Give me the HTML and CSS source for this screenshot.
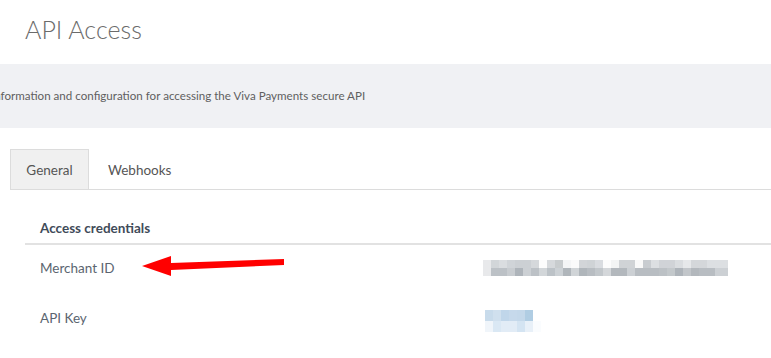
FILE: index.html
```html
<!DOCTYPE html>
<html lang="en">
<head>
  <meta charset="UTF-8">
  <title>API Access</title>
  <meta name="viewport" content="width=device-width, initial-scale=1">
  <link rel="stylesheet" href="styles.css">
</head>
<body>
  <header class="page-head">
    <h1>API Access</h1>
  </header>

  <div class="intro">
    <p>Information and configuration for accessing the Viva Payments secure API</p>
  </div>

  <nav class="tabs">
    <a class="tab active">General</a>
    <a class="tab">Webhooks</a>
  </nav>

  <section class="creds">
    <h3>Access credentials</h3>
    <div class="row">
      <span class="label">Merchant ID</span>
      <span class="blur blur-merchant"></span>
    </div>
    <div class="row">
      <span class="label">API Key</span>
      <span class="blur blur-key"></span>
    </div>

    <svg class="arrow" width="150" height="26" viewBox="0 0 150 26">
      <polygon points="0,12 29,2 29,9 142,5 142,11 29,16 29,22" fill="#ff0000"/>
    </svg>
  </section>
</body>
</html>
```

FILE: styles.css
```css
body {
  margin: 0;
  font-family: 'Lato', 'Open Sans', sans-serif;
  background-color: #ffffff;
  color: #5b6570;
  overflow: hidden;
}

.page-head {
  height: 64px;
  padding-left: 25px;
  box-sizing: border-box;
}

.page-head h1 {
  margin: 0;
  padding-top: 14px;
  font-size: 25px;
  font-weight: 300;
  color: #6b6b6b;
  line-height: 30px;
}

.intro {
  height: 64px;
  background-color: #f0f1f4;
  display: flex;
  align-items: center;
}

.intro p {
  margin: 0 0 2px -9px;
  font-size: 11.6px;
  color: #5f5f5f;
  white-space: nowrap;
}

.tabs {
  display: flex;
  margin: 21px 0 0 10px;
  border-bottom: 1px solid #dcdcdc;
}

.tab {
  height: 40px;
  padding: 0 18px;
  display: flex;
  align-items: center;
  font-size: 13.5px;
  color: #555;
  border: 1px solid transparent;
  border-bottom: none;
  box-sizing: border-box;
}

.tab.active {
  width: 79px;
  justify-content: center;
  padding: 0;
  background-color: #f0f0f0;
  border-color: #dcdcdc;
}

.creds {
  position: relative;
  margin-left: 25px;
  padding-top: 30px;
}

.creds h3 {
  margin: 0;
  padding: 0 0 7px 15px;
  font-size: 13.5px;
  font-weight: 700;
  color: #3f4b59;
  border-bottom: 2px solid #e2e2e2;
}

.row {
  display: flex;
  align-items: flex-start;
  height: 50px;
  padding: 15px 0 0 15px;
  box-sizing: border-box;
}

.label {
  width: 443px;
  font-size: 13.5px;
  line-height: 16px;
  color: #5b6570;
}

.blur {
  display: block;
  background-repeat: no-repeat;
}

.blur-merchant {
  width: 245px;
  height: 16px;
  background-image:
    linear-gradient(to right,
      #e8e9eb 0 8px, #d2d6d9 8px 16px, #dadde0 16px 24px, #d0d4d8 24px 32px,
      #ccd0d4 32px 48px, #d5d8db 48px 56px, #fcfcfc 56px 64px, #d6d9dc 64px 72px,
      #c8ccce 72px 80px, #f4f5f6 80px 88px, #fafafa 88px 96px, #d2d5d8 96px 104px,
      #cfd3d6 104px 112px, #d9dce0 112px 120px, #fcfcfc 120px 128px, #f3f4f4 128px 136px,
      #d0d3d6 136px 152px, #f9f9f9 152px 160px, #c8ccd0 160px 168px, #dcdfe2 168px 176px,
      #d0d3d7 176px 192px, #dadde0 192px 200px, #e6e8ea 200px 208px, #d4d7da 208px 224px,
      #dcdfe2 224px 245px),
    linear-gradient(to right,
      #e8e9eb 0 8px, #bcc1c6 8px 24px, #c8ccd0 24px 32px, #aeb4ba 32px 40px,
      #ccd0d4 40px 48px, #bcc1c6 48px 56px, #d2d6d9 56px 64px, #bcc2c7 64px 72px,
      #ccd1d5 72px 80px, #b0b6bb 80px 88px, #d0d4d7 88px 96px, #b0b6bb 96px 104px,
      #b8bdc2 104px 112px, #c2c7cb 112px 120px, #d4d7da 120px 128px, #b3b8bd 128px 144px,
      #ccd0d4 144px 152px, #b8bdc2 152px 176px, #bcc1c5 176px 184px, #c3c8cb 184px 192px,
      #aeb4ba 192px 200px, #c2c6ca 200px 208px, #b3b8bd 208px 216px, #b8bdc2 216px 232px,
      #ccd0d4 232px 245px);
  background-size: 245px 8px, 245px 8px;
  background-position: 0 0, 0 8px;
}

.blur-key {
  width: 56px;
  height: 22px;
  margin-left: 2px;
  background-image:
    linear-gradient(to right,
      #c8dbeb 0 8px, #d0e0ee 8px 16px, #c0d6ea 16px 24px, #c6d9eb 24px 32px,
      #c4d8ea 32px 40px, #b0cde3 40px 48px, transparent 48px 56px),
    linear-gradient(to right,
      #f0f5fa 0 8px, #dae8f4 8px 16px, #e2ecf6 16px 32px, #d4e4f2 32px 40px,
      #e8f0f8 40px 48px, #fafcfe 48px 56px);
  background-size: 56px 11px, 56px 11px;
  background-position: 0 0, 0 11px;
}

.arrow {
  position: absolute;
  left: 117px;
  top: 64px;
}
```
